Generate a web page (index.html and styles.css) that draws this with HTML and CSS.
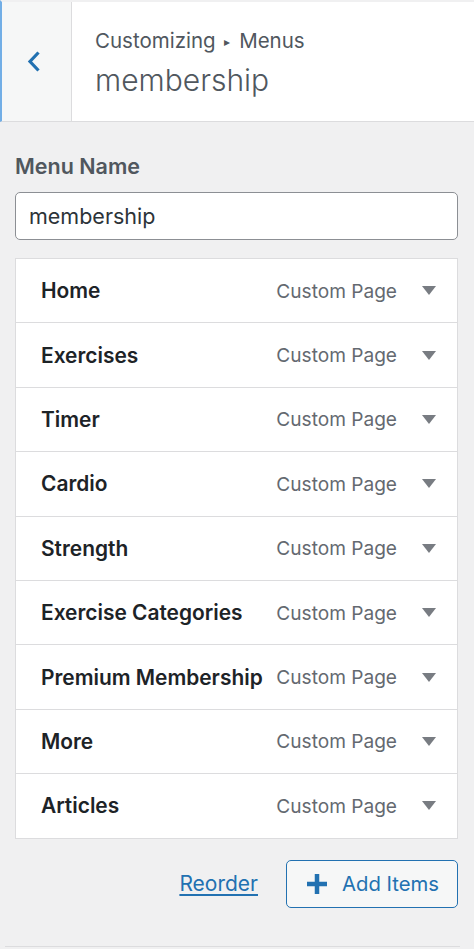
FILE: index.html
```html
<!DOCTYPE html>
<html lang="en">
<head>
<meta charset="utf-8">
<title>Customizing Menus</title>
<link rel="stylesheet" href="styles.css">
</head>
<body>
<div class="panel">
  <header class="head">
    <button class="back" aria-label="Back">
      <svg width="16" height="24" viewBox="0 0 16 24"><path d="M12.5 2.5 L4 11.5 L12.5 20.5" fill="none" stroke="#2271b1" stroke-width="3.2"/></svg>
    </button>
    <div class="titles">
      <div class="crumb">Customizing <span class="sep">▸</span> Menus</div>
      <div class="title">membership</div>
    </div>
  </header>
  <main class="content">
    <label class="label" for="mn">Menu Name</label>
    <input id="mn" class="name" type="text" value="membership">
    <ul class="items">
      <li class="item"><span class="iname">Home</span><span class="itype">Custom Page</span><span class="arrow"></span></li>
      <li class="item"><span class="iname">Exercises</span><span class="itype">Custom Page</span><span class="arrow"></span></li>
      <li class="item"><span class="iname">Timer</span><span class="itype">Custom Page</span><span class="arrow"></span></li>
      <li class="item"><span class="iname">Cardio</span><span class="itype">Custom Page</span><span class="arrow"></span></li>
      <li class="item"><span class="iname">Strength</span><span class="itype">Custom Page</span><span class="arrow"></span></li>
      <li class="item"><span class="iname">Exercise Categories</span><span class="itype">Custom Page</span><span class="arrow"></span></li>
      <li class="item"><span class="iname">Premium Membership</span><span class="itype">Custom Page</span><span class="arrow"></span></li>
      <li class="item"><span class="iname">More</span><span class="itype">Custom Page</span><span class="arrow"></span></li>
      <li class="item"><span class="iname">Articles</span><span class="itype">Custom Page</span><span class="arrow"></span></li>
    </ul>
    <div class="actions">
      <a class="reorder" href="#">Reorder</a>
      <button class="add">
        <svg width="22" height="22" viewBox="0 0 22 22"><path d="M11 1 V21 M1 11 H21" stroke="#2271b1" stroke-width="4.5"/></svg>
        <span>Add Items</span>
      </button>
    </div>
  </main>
  <div class="foot"></div>
</div>
</body>
</html>
```
FILE: styles.css
```css
* { box-sizing: border-box; }
html, body { margin: 0; padding: 0; }
body {
  background: #f0f0f1;
  font-family: Inter, "Noto Sans", sans-serif;
  color: #1d2327;
  width: 474px;
  height: 949px;
  overflow: hidden;
}
.panel { display: flex; flex-direction: column; }
.head {
  display: flex;
  height: 122px;
  border-top: 2px solid #f0f0f1;
  border-left: 2px solid #72aee6;
  border-bottom: 1px solid #dcdcde;
  background: #fff;
}
.back {
  width: 70px;
  flex: none;
  background: #f6f7f7;
  border: 0;
  border-right: 1px solid #dcdcde;
  display: flex;
  align-items: center;
  justify-content: center;
  padding: 0 6px 0 0;
  margin: 0;
}
.titles {
  padding: 25px 0 0 23px;
  color: #50575e;
}
.crumb { font-size: 20.5px; line-height: 28px; white-space: nowrap; }
.sep { font-size: 12px; position: relative; top: -2px; margin: 0 3px; }
.title { font-size: 30px; font-weight: 300; line-height: 40px; margin-top: 2px; }
.content { padding: 30px 16px 0 15px; display: flex; flex-direction: column; }
.label {
  font-size: 21.5px;
  font-weight: 600;
  color: #50575e;
  line-height: 28px;
}
.name {
  margin-top: 12px;
  height: 48px;
  border: 1px solid #8c8f94;
  border-radius: 5px;
  padding: 0 13px;
  font: 400 21.5px Inter, "Noto Sans", sans-serif;
  color: #2c3338;
  background: #fff;
}
.items {
  list-style: none;
  margin: 18px 0 0;
  padding: 0;
  border: 1px solid #dcdcde;
  border-bottom: 0;
}
.item {
  display: flex;
  align-items: center;
  height: 64.4px;
  padding: 0 21px 0 25px;
  background: #fff;
  border-bottom: 1px solid #dcdcde;
}
.iname { flex: 1; font-size: 20.9px; font-weight: 600; color: #1d2327; white-space: nowrap; }
.itype { font-size: 19.1px; color: #646970; margin-right: 25px; }
.arrow {
  width: 0; height: 0;
  border-left: 7px solid transparent;
  border-right: 7px solid transparent;
  border-top: 9px solid #787c82;
}
.actions {
  display: flex;
  justify-content: flex-end;
  align-items: center;
  gap: 28px;
  margin-top: 21px;
}
.reorder {
  color: #2271b1;
  font-size: 21px;
  text-decoration: underline;
  text-underline-offset: 3px;
}
.add {
  display: flex;
  align-items: center;
  gap: 14px;
  width: 172px;
  height: 48px;
  padding: 0 0 0 19px;
  border: 1px solid #2271b1;
  border-radius: 5px;
  background: #f6f7f7;
  color: #2271b1;
  font: 400 20.3px Inter, "Noto Sans", sans-serif;
}
.foot {
  margin: 38px 14px 0 5px;
  border-top: 1px solid #dcdcde;
}
```
